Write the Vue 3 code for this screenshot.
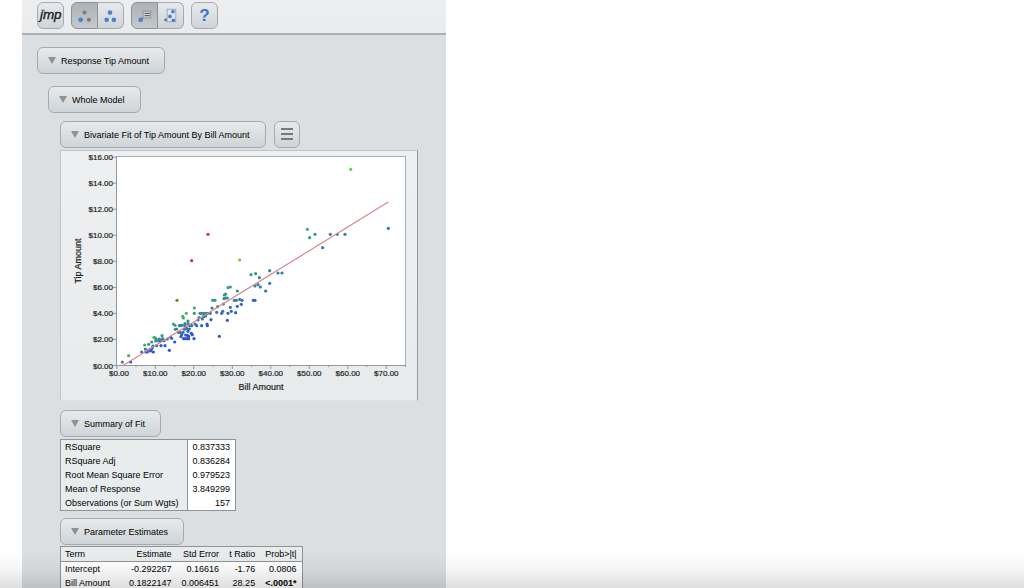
<template>
  <main class="report">
    <nav class="toolbar" aria-label="Report tools">
      <button class="tool single" aria-label="JMP home">
        <svg class="logo" viewBox="0 0 26 26" aria-hidden="true">
          <text x="2" y="17" class="logo-text">jmp</text>
          <circle cx="6" cy="8" r="1.2" fill="#3f9bdc" />
        </svg>
      </button>
      <div class="tool-group">
        <button class="tool active" aria-label="Select points">
          <svg viewBox="0 0 26 26" aria-hidden="true">
            <circle cx="13" cy="10" r="2.2" fill="#7b8084" />
            <circle cx="9" cy="17.5" r="2.5" fill="#4d7fd3" />
            <circle cx="17.5" cy="17.5" r="2.2" fill="#7b8084" />
          </svg>
        </button>
        <button class="tool" aria-label="Select all points">
          <svg viewBox="0 0 26 26" aria-hidden="true">
            <circle cx="12.5" cy="10" r="2.4" fill="#4d7fd3" />
            <circle cx="9" cy="17.5" r="2.4" fill="#4d7fd3" />
            <circle cx="16.5" cy="17.5" r="2.4" fill="#4d7fd3" />
          </svg>
        </button>
      </div>
      <div class="tool-group">
        <button class="tool active" aria-label="Show data tips">
          <svg viewBox="0 0 26 26" aria-hidden="true">
            <path d="M10 16L13 14" stroke="#8d9296" />
            <rect x="11.5" y="8.5" width="8" height="7" fill="#d9dadb" stroke="#8b8f93" />
            <path d="M13 10.8H18.5M13 13.2H18.5" stroke="#3d4144" />
            <circle cx="9" cy="17.5" r="2.5" fill="#4d7fd3" />
          </svg>
        </button>
        <button class="tool" aria-label="Brush points">
          <svg viewBox="0 0 26 26" aria-hidden="true">
            <rect x="9.5" y="6.5" width="9" height="13" fill="#dfe7ef" stroke="#8facc9" />
            <circle cx="15.5" cy="9" r="1.9" fill="#4d7fd3" />
            <circle cx="12.5" cy="14" r="2" fill="#4d7fd3" />
            <circle cx="16" cy="18" r="1.9" fill="#4d7fd3" />
            <circle cx="8" cy="17.5" r="1.7" fill="#7b8084" />
          </svg>
        </button>
      </div>
      <button class="tool single help" aria-label="Help">?</button>
    </nav>

    <section class="level-one">
      <button class="outline">Response Tip Amount</button>

      <div class="level-two">
        <button class="outline">Whole Model</button>

        <div class="level-three">
          <div class="title-row">
            <button class="outline">Bivariate Fit of Tip Amount By Bill Amount</button>
            <button class="menu" aria-label="Chart menu">
              <svg viewBox="0 0 24 25" aria-hidden="true">
                <path d="M6 7H18M6 12H18M6 17H18" stroke="#75797c" stroke-width="2" />
              </svg>
            </button>
          </div>

          <div class="chart">
            <svg viewBox="0 0 356 249" role="img" aria-label="Tip Amount by Bill Amount">
              <rect x="55.5" y="5.5" width="289" height="209" fill="#fff" stroke="#a9b0b5" />
              <path d="M55.5 5V214.5H345" fill="none" stroke="#93999d" />
              <g v-for="n in tipTicks" :key="'t' + n">
                <path :d="`M52 ${tipY(n)}H56`" stroke="#93999d" />
                <text x="52" :y="tipY(n) + 3" text-anchor="end" class="tick">{{ money(n) }}</text>
              </g>
              <g v-for="n in billTicks" :key="'b' + n">
                <path :d="`M${billX(n)} 214V218`" stroke="#93999d" />
                <text :x="n ? billX(n) : 58" y="225" text-anchor="middle" class="tick">{{ money(n) }}</text>
              </g>
              <path v-for="n in minorTicks" :key="'m' + n" :d="`M${billX(n)} 214V216`" stroke="#93999d" />
              <circle
                v-for="(dot, i) in dots"
                :key="i"
                :cx="dot.x"
                :cy="dot.y"
                r="1.6"
                :fill="dot.color"
              />
              <path
                :d="`M${billX(1.6)} ${tipY(0)}L${billX(70.5)} ${tipY(12.55)}`"
                stroke="#dc858c"
                stroke-width="1.2"
              />
              <text x="200" y="239" text-anchor="middle" class="axis">Bill Amount</text>
              <text transform="translate(20 110) rotate(-90)" text-anchor="middle" class="axis">Tip Amount</text>
            </svg>
          </div>

          <button class="outline">Summary of Fit</button>
          <table class="summary">
            <tbody>
              <tr v-for="row in summary" :key="row[0]">
                <th scope="row">{{ row[0] }}</th>
                <td>{{ row[1] }}</td>
              </tr>
            </tbody>
          </table>

          <button class="outline">Parameter Estimates</button>
          <table class="estimates">
            <thead>
              <tr>
                <th v-for="name in columns" :key="name" scope="col">{{ name }}</th>
              </tr>
            </thead>
            <tbody>
              <tr v-for="row in estimates" :key="row[0]">
                <td v-for="cell in row" :key="cell" :class="{ significant: cell.endsWith('*') }">{{ cell }}</td>
              </tr>
            </tbody>
          </table>
        </div>
      </div>
    </section>
    <div class="page-fade"></div>
  </main>
</template>

<script setup>
const summary = [
  ['RSquare', '0.837333'],
  ['RSquare Adj', '0.836284'],
  ['Root Mean Square Error', '0.979523'],
  ['Mean of Response', '3.849299'],
  ['Observations (or Sum Wgts)', '157'],
]

const columns = ['Term', 'Estimate', 'Std Error', 't Ratio', 'Prob>|t|']
const estimates = [
  ['Intercept', '-0.292267', '0.16616', '-1.76', '0.0806'],
  ['Bill Amount', '0.1822147', '0.006451', '28.25', '<.0001*'],
]

const tipTicks = [0, 2, 4, 6, 8, 10, 12, 14, 16]
const billTicks = [0, 10, 20, 30, 40, 50, 60, 70]
const minorTicks = [5, 15, 25, 35, 45, 55, 65, 75]

// Chart scales
const billX = (n) => 55.8 + n * 3.85
const tipY = (n) => 214.5 - n * 13.02
const money = (n) => `$${n.toFixed(2)}`

// Points on a fine grid, three steps to a chart unit
const points = [
  [444, -107], [395, -28], [872, -302], [539, -30], [351, 91],
  [742, -122], [749, -97], [765, -107], [811, -107], [832, -107], [855, -107], [788, -67], [985, -125],
  [629, 2], [654, 9], [666, 9], [573, 14], [587, 11], [598, 23],
  [585, 48], [594, 44], [601, 51], [629, 40], [617, 63], [580, 91], [585, 91],
  [532, 63], [529, 91], [539, 88], [546, 91], [544, 103], [532, 109], [527, 128],
  [187, 276], [206, 257], [212, 276], [245, 246], [254, 225], [256, 237], [257, 246], [262, 246],
  [265, 241], [270, 238], [272, 243], [275, 237], [277, 233], [279, 228], [280, 246], [266, 223],
  [275, 216], [282, 202], [286, 204], [287, 213], [289, 208], [296, 213], [298, 207], [303, 227],
  [303, 212], [306, 197], [312, 212], [315, 227], [308, 206], [322, 207], [328, 241], [332, 202],
  [335, 205], [344, 216], [290, 227], [340, 162], [345, 166], [346, 178], [350, 177], [355, 187],
  [358, 167], [362, 166], [366, 166], [368, 139], [370, 144], [379, 130], [403, 114], [403, 130],
  [369, 187], [373, 178], [374, 166], [375, 161], [384, 153], [384, 161], [378, 172], [382, 177],
  [388, 177], [384, 184], [377, 195], [382, 196], [386, 199], [389, 167], [395, 167], [394, 190],
  [397, 194], [383, 206], [371, 206], [377, 206], [386, 206], [402, 206], [363, 200], [365, 194],
  [360, 187], [405, 162], [410, 167], [425, 167], [414, 150], [417, 143], [420, 130], [425, 130],
  [433, 130], [437, 130], [443, 130], [451, 130], [427, 147], [431, 140], [437, 138], [432, 136],
  [441, 162], [442, 167], [453, 149], [456, 114], [458, 91], [465, 91], [470, 127], [473, 110],
  [478, 199], [485, 130], [488, 124], [490, 102], [492, 86], [493, 75], [497, 72], [497, 84],
  [502, 84], [502, 151], [504, 130], [504, 53], [511, 51], [511, 112], [514, 124], [523, 91],
]

// Colour follows the tip as a share of the bill
const colorStops = [
  [0.1, [48, 78, 232]],
  [0.13, [48, 88, 210]],
  [0.16, [52, 120, 172]],
  [0.19, [56, 142, 142]],
  [0.215, [64, 172, 108]],
  [0.25, [104, 212, 60]],
  [0.317, [140, 124, 32]],
  [0.4, [220, 52, 48]],
]

function colorFor(share) {
  if (share <= colorStops[0][0]) return `rgb(${colorStops[0][1]})`
  for (let i = 1; i < colorStops.length; i++) {
    const [low, from] = colorStops[i - 1]
    const [high, to] = colorStops[i]
    if (share <= high) {
      const t = (share - low) / (high - low)
      return `rgb(${from.map((c, j) => Math.round(c + (to[j] - c) * t))})`
    }
  }
  return `rgb(${colorStops[colorStops.length - 1][1]})`
}

const dots = points.map(([px, py]) => {
  const x = px / 3 - 1
  const y = py / 3 + 119
  const bill = (x - 55.8) / 3.85
  const tip = (214.5 - y) / 13.02
  const share = bill < 5 ? tip / bill / 1.1 : tip / bill
  return { x, y, color: colorFor(share) }
})
</script>

<style>
body {
  background: #fff;
}
</style>

<style scoped>
.report {
  box-sizing: border-box;
  max-width: 424px;
  height: 100vh;
  margin-left: 22px;
  overflow: hidden;
  background: #dbdfe2;
  color: #000;
  font-family: "Liberation Sans", Arial, sans-serif;
  font-size: 9px;
}

.toolbar {
  display: flex;
  gap: 7px;
  padding: 2px 15px 4px;
  background: linear-gradient(#eceeef, #e9ebed);
  border-bottom: 2px solid #a9afb2;
}

button {
  box-sizing: border-box;
  margin: 0;
  padding: 0;
  color: inherit;
  font: inherit;
  border: 1px solid #a4aaaf;
  background: linear-gradient(#e7eaec, #cfd4d8);
}

.tool {
  width: 27px;
  height: 27px;
}

.menu {
  width: 26px;
  height: 27px;
}

.tool svg {
  display: block;
  width: 25px;
  height: 25px;
}

.menu svg {
  display: block;
  width: 24px;
  height: 25px;
}

.single,
.menu {
  border-radius: 6px;
}

.tool-group {
  display: flex;
}

.tool-group .tool:first-child {
  border-radius: 6px 0 0 6px;
}

.tool-group .tool:last-child {
  width: 26px;
  border-left: 0;
  border-radius: 0 6px 6px 0;
}

.tool.active {
  border-color: #8c9297;
  background: linear-gradient(#acb2b6, #c4c9cc);
}

.logo-text {
  font-size: 14px;
  font-style: italic;
  fill: #202224;
  stroke: #202224;
  stroke-width: 0.4;
}

.tool.help {
  color: #3f73c9;
  font-size: 17px;
  font-weight: bold;
}

.level-one {
  padding: 12px 0 0 15px;
}

.level-two {
  padding: 12px 0 0 11px;
}

.level-three {
  padding: 8px 28px 0 12px;
}

.outline {
  display: flex;
  align-items: center;
  gap: 5px;
  height: 27px;
  padding: 0 15px 0 10px;
  border-radius: 6px;
}

.outline::before {
  content: '';
  border: 4px solid transparent;
  border-top: 7px solid #8d9295;
  border-bottom: 0;
}

.title-row {
  display: flex;
  gap: 8px;
}

.chart {
  margin: 2px 0 9px;
  border: 1px solid #c0c5c9;
  border-right-color: #92999e;
  border-bottom-color: #dfe3e5;
  background: linear-gradient(#eeeff0, #e8ebec);
}

.chart svg {
  display: block;
  width: 100%;
}

.tick {
  font-size: 8px;
  fill: #1b1c1d;
  stroke: #1b1c1d;
  stroke-width: 0.2;
}

.axis {
  font-size: 9px;
  fill: #1b1c1d;
  stroke: #1b1c1d;
  stroke-width: 0.2;
}

table {
  margin: 2px 0 7px;
  border: 1px solid #8e9599;
  border-collapse: separate;
  border-spacing: 0;
  line-height: 14px;
  white-space: nowrap;
}

th,
td {
  padding: 0 4px;
  font-weight: normal;
  text-align: right;
}

th {
  background: #e8eced;
}

.summary th {
  padding-right: 8px;
  border-right: 1px solid #8e9599;
  text-align: left;
}

.summary td {
  padding: 0 5px;
  background: #fff;
}

.estimates {
  margin-top: 1px;
  background: #fff;
}

.estimates thead th {
  border-bottom: 1px solid #8e9599;
}

.estimates th,
.estimates td {
  padding: 0 5px;
}

.estimates th:first-child,
.estimates td:first-child {
  padding-left: 4px;
  padding-right: 14px;
  text-align: left;
}

.estimates .significant {
  font-weight: bold;
}

.page-fade {
  position: fixed;
  right: 0;
  bottom: 0;
  left: 0;
  height: 36px;
  background: linear-gradient(transparent, rgba(0, 0, 0, 0.04) 50%, rgba(0, 0, 0, 0.13));
  pointer-events: none;
}
</style>
